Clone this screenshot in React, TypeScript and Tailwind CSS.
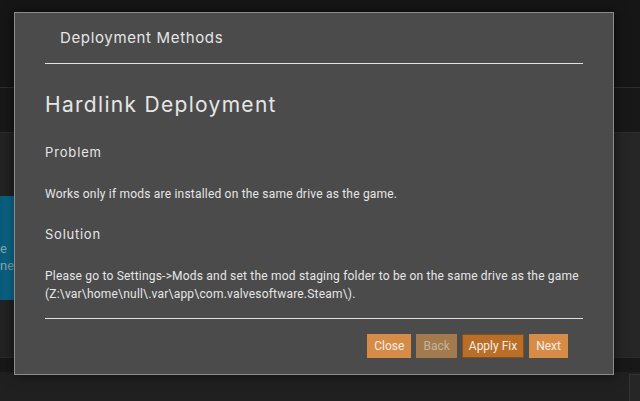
export default function App() {
  return (
    <div className="relative w-[640px] h-[401px] overflow-hidden bg-[#212121] font-['Roboto',sans-serif]">
      {/* page behind the dialog */}
      <div className="flex flex-col h-full">
        <div className="h-[88px] bg-[#161616] border-b border-[#2e2e2e]" />
        <div className="h-[45px] bg-[#181818] border-b border-[#2e2e2e]" />
        <div className="h-[224px] flex bg-[#232323]">
          <div className="w-[14px] pt-[63px]">
            <div className="h-[104px] w-[14px] overflow-hidden bg-gradient-to-r from-[#0a5a78] to-[#0b7093] flex flex-col items-start justify-center pt-[18px] text-[13px] leading-[17px] text-[#86a8b5]">
              <span className="whitespace-nowrap">e</span>
              <span className="whitespace-nowrap">ne</span>
            </div>
          </div>
          <div className="flex-1" />
          <div className="w-[27px] bg-[#262626]" />
        </div>
        <div className="h-[15px] bg-[#181818] border-t border-[#2a2a2a]" />
        <div className="flex-1 flex justify-end bg-[#202020]">
          <div className="w-[11px] mt-[2px] border-l border-t border-[#333] bg-[#262626]" />
        </div>
      </div>

      {/* dialog */}
      <div className="absolute left-[14px] top-[12px] w-[600px] h-[363px] border border-[#8c8c8c] bg-[#4b4b4b] px-[30px] flex flex-col text-[#e6e6e6] shadow-[0_0_12px_rgba(0,0,0,0.6)]">
        <div className="h-[51px] shrink-0 border-b border-[#e0e0e0] flex items-center pl-[15px] font-['Inter',sans-serif] text-[15px] tracking-[0.65px]">
          Deployment Methods
        </div>
        <h1 className="mt-[28px] font-['Inter',sans-serif] text-[21px] leading-[26px] tracking-[1.3px]">
          Hardlink Deployment
        </h1>
        <h2 className="mt-[25px] font-['Inter',sans-serif] text-[13px] leading-[18px] tracking-[0.85px]">Problem</h2>
        <p className="mt-[25px] text-[12px] leading-[16px] tracking-[0.2px]">
          Works only if mods are installed on the same drive as the game.
        </p>
        <h2 className="mt-[23px] font-['Inter',sans-serif] text-[13px] leading-[18px] tracking-[0.75px]">Solution</h2>
        <p className="mt-[24px] text-[12px] leading-[18px] tracking-[0.2px]">
          Please go to Settings-&gt;Mods and set the mod staging folder to be on the same drive as the game
          <br />
          (Z:\var\home\null\.var\app\com.valvesoftware.Steam\).
        </p>
        <div className="mt-[15px] border-t border-[#e0e0e0]" />
        <div className="mt-[15px] flex justify-end gap-[5px] pr-[15px] text-[12px]">
          <button className="h-[24px] px-[7px] bg-[#d68c46] text-[#f4ede6]">Close</button>
          <button className="h-[24px] px-[7px] bg-[#a27a4e] text-[#c7b39d]">Back</button>
          <button className="h-[24px] px-[6px] bg-[#b96f28] border border-[#85501f] text-[#f4ede6]">Apply Fix</button>
          <button className="h-[24px] px-[7px] bg-[#d68c46] text-[#f4ede6]">Next</button>
        </div>
      </div>
    </div>
  );
}
